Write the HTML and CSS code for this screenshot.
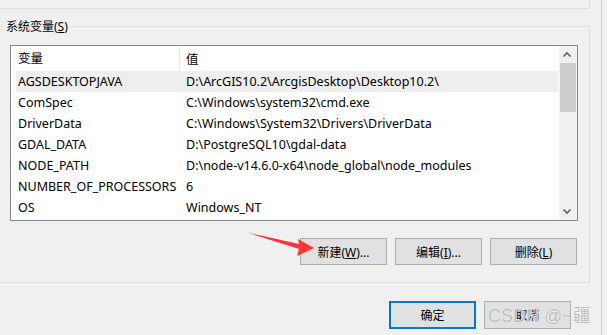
FILE: index.html
```html
<!DOCTYPE html>
<html lang="zh-CN">
<head>
<meta charset="utf-8">
<title>系统变量</title>
<link rel="stylesheet" href="styles.css">
</head>
<body>
<div class="window">
  <div class="prev-group"></div>
  <div class="group">
    <div class="legend">系统变量(<u>S</u>)</div>
    <div class="list">
      <div class="list-main">
        <div class="head"><div class="c1">变量</div><div class="c2">值</div></div>
        <div class="row sel"><div class="c1">AGSDESKTOPJAVA</div><div class="c2">D:\ArcGIS10.2\ArcgisDesktop\Desktop10.2\</div></div>
        <div class="row"><div class="c1">ComSpec</div><div class="c2">C:\Windows\system32\cmd.exe</div></div>
        <div class="row"><div class="c1">DriverData</div><div class="c2">C:\Windows\System32\Drivers\DriverData</div></div>
        <div class="row"><div class="c1">GDAL_DATA</div><div class="c2">D:\PostgreSQL10\gdal-data</div></div>
        <div class="row"><div class="c1">NODE_PATH</div><div class="c2">D:\node-v14.6.0-x64\node_global\node_modules</div></div>
        <div class="row"><div class="c1">NUMBER_OF_PROCESSORS</div><div class="c2">6</div></div>
        <div class="row"><div class="c1">OS</div><div class="c2">Windows_NT</div></div>
      </div>
      <div class="vscroll">
        <div class="sb-btn"><svg width="18" height="17" viewBox="0 0 18 17"><path d="M4.5 10.5 L8 7 L11.5 10.5" fill="none" stroke="#606060" stroke-width="1.6"/></svg></div>
        <div class="sb-track"><div class="thumb"></div></div>
        <div class="sb-btn"><svg width="18" height="17" viewBox="0 0 18 17"><path d="M4.5 6.5 L8 10 L11.5 6.5" fill="none" stroke="#606060" stroke-width="1.6"/></svg></div>
      </div>
    </div>
    <div class="btn-row">
      <button class="btn">新建(<u>W</u>)...</button>
      <button class="btn">编辑(<u>I</u>)...</button>
      <button class="btn">删除(<u>L</u>)</button>
    </div>
  </div>
  <div class="footer">
    <button class="btn btn-default">确定</button>
    <button class="btn">取消</button>
  </div>
</div>
<svg class="arrow" width="607" height="335" viewBox="0 0 607 335">
  <polygon points="247,232.5 299,244 298,239 314,248 297,256 299,249" fill="#ff3535"/>
</svg>
<div class="watermark">CSDN @~疆</div>
</body>
</html>
```
FILE: styles.css
```css
html, body {
  margin: 0;
  padding: 0;
}
body {
  width: 607px;
  height: 335px;
  overflow: hidden;
  position: relative;
  background: #f0f0f0;
  font-family: "Noto Sans", "Noto Sans CJK SC", sans-serif;
  font-size: 12px;
  color: #000;
}
.window {
  width: 601px;
  height: 335px;
  border-right: 1px solid #d2d2d2;
}
.prev-group {
  width: 589px;
  height: 8px;
  border-right: 1px solid #dcdcdc;
  border-bottom: 1px solid #dcdcdc;
}
.group {
  box-sizing: border-box;
  margin-top: 17px;
  width: 590px;
  height: 257px;
  border: 1px solid #dcdcdc;
  border-left: none;
}
.legend {
  width: fit-content;
  margin-top: -7px;
  margin-left: 3px;
  padding: 0 3px;
  height: 14px;
  line-height: 14px;
  background: #f0f0f0;
  white-space: nowrap;
}
.list {
  box-sizing: border-box;
  margin: 11px 0 0 10px;
  width: 568px;
  height: 176px;
  border: 1px solid #828790;
  background: #fff;
  display: flex;
  font-size: 12.5px;
}
.list-main {
  flex: 1;
  padding: 0 1px 0 5px;
  overflow: hidden;
}
.head {
  height: 25px;
  display: flex;
  align-items: center;
}
.head .c1 {
  height: 25px;
  line-height: 25px;
  border-right: 1px solid #e5e5e5;
}
.row {
  height: 21px;
  line-height: 21px;
  display: flex;
  white-space: nowrap;
}
.row.sel {
  background: #eeeeee;
}
.c1 {
  box-sizing: border-box;
  width: 164px;
  padding-left: 2px;
  flex: none;
}
.c2 {
  padding-left: 6px;
}
.vscroll {
  width: 18px;
  flex: none;
  background: #f0f0f0;
  display: flex;
  flex-direction: column;
}
.sb-btn {
  height: 17px;
  flex: none;
}
.sb-btn svg {
  display: block;
}
.sb-track {
  flex: 1;
}
.thumb {
  margin: 0 1px;
  height: 49px;
  background: #cdcdcd;
}
.btn-row {
  display: flex;
  justify-content: flex-end;
  gap: 8px;
  margin-top: 17px;
  padding-right: 12px;
}
.btn {
  box-sizing: border-box;
  width: 87px;
  height: 27px;
  margin: 0;
  padding: 0;
  background: #e1e1e1;
  border: 1px solid #adadad;
  font-family: "Noto Sans", "Noto Sans CJK SC", sans-serif;
  font-size: 12px;
  color: #000;
}
.footer {
  display: flex;
  justify-content: flex-end;
  gap: 8px;
  margin-top: 18px;
  padding-right: 30px;
}
.footer .btn {
  height: 28px;
}
.btn-default {
  border: 2px solid #0078d7;
}
.arrow {
  position: absolute;
  left: 0;
  top: 0;
  pointer-events: none;
}
.watermark {
  position: absolute;
  left: 488px;
  top: 304px;
  font-family: "Liberation Sans", "Noto Sans CJK SC", sans-serif;
  font-size: 18px;
  line-height: 24px;
  color: rgba(140, 140, 140, 0.6);
  text-shadow: 0 0 1px #fff, 0 0 1px #fff;
  white-space: nowrap;
  pointer-events: none;
}
```
